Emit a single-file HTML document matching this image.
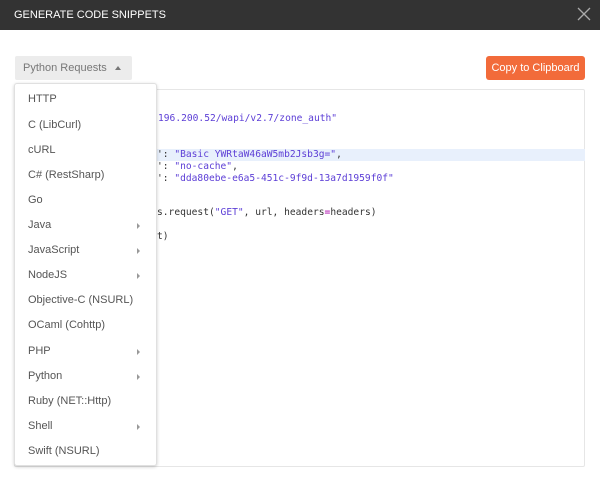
<!DOCTYPE html>
<html><head><style>
*{margin:0;padding:0;box-sizing:border-box}
body{width:600px;height:481px;background:#fff;font-family:"Liberation Sans",sans-serif;position:relative;overflow:hidden}
.hdr{position:absolute;left:0;top:0;width:600px;height:30px;background:#333;color:#fff;font-size:11px;line-height:30px;padding-left:14px}
.x{position:absolute;right:9px;top:7px;width:14px;height:14px}
.dd{position:absolute;left:15px;top:56px;width:117px;height:24px;background:#ececec;border-radius:2px;color:#777;font-size:11px;line-height:24px;padding-left:8px}
.dd:after{content:"";position:absolute;left:100px;top:10px;border-left:3px solid transparent;border-right:3px solid transparent;border-bottom:4px solid #777}
.copy{position:absolute;left:486px;top:56px;width:99px;height:24px;background:#f26b3a;border-radius:3px;color:#fff;font-size:11px;line-height:24px;text-align:center}
.code{position:absolute;left:14px;top:89px;width:571px;height:378px;border:1px solid #e6e6e6;border-radius:2px}
.hl{position:absolute;left:145px;top:149px;width:440px;height:12px;background:#e8f0fc}
.c{position:absolute;font-family:"DejaVu Sans Mono",monospace;font-size:9.6px;color:#333;white-space:pre;line-height:12px}
.s{color:#5c3ed6}
.menu{position:absolute;left:14px;top:83px;width:143px;height:383px;background:#fff;border:1px solid #e0e0e0;border-radius:3px;box-shadow:0 1px 3px rgba(0,0,0,.2)}
.it{position:absolute;left:13px;font-size:11px;color:#555;line-height:14px}
.ar{position:absolute;left:122px;width:0;height:0;border-top:3px solid transparent;border-bottom:3px solid transparent;border-left:3px solid #999}
</style></head><body>
<div class="hdr">GENERATE CODE SNIPPETS</div>
<svg class="x" viewBox="0 0 14 14"><path d="M1 1L13 13M13 1L1 13" stroke="#aaa" stroke-width="1.3"/></svg>
<div class="dd">Python Requests</div>
<div class="copy">Copy to Clipboard</div>
<div class="code"></div>
<div class="hl"></div>
<div class="c s" style="left:158px;top:113px">196.200.52/wapi/v2.7/zone_auth"</div>
<div class="c" style="left:157px;top:149px">': <span class="s">"Basic YWRtaW46aW5mb2Jsb3g="</span>,</div>
<div class="c" style="left:157px;top:161px">': <span class="s">"no-cache"</span>,</div>
<div class="c" style="left:157px;top:173px">': <span class="s">"dda80ebe-e6a5-451c-9f9d-13a7d1959f0f"</span></div>
<div class="c" style="left:157px;top:207px">s.request(<span class="s">"GET"</span>, url, headers<span style="color:#a0a">=</span>headers)</div>
<div class="c" style="left:157px;top:231px">t)</div>
<div class="menu">
<div class="it" style="top:8px">HTTP</div>
<div class="it" style="top:34px">C (LibCurl)</div>
<div class="it" style="top:59px">cURL</div>
<div class="it" style="top:84px">C# (RestSharp)</div>
<div class="it" style="top:109px">Go</div>
<div class="it" style="top:134px">Java</div><div class="ar" style="top:139px"></div>
<div class="it" style="top:159px">JavaScript</div><div class="ar" style="top:164px"></div>
<div class="it" style="top:184px">NodeJS</div><div class="ar" style="top:189px"></div>
<div class="it" style="top:209px">Objective-C (NSURL)</div>
<div class="it" style="top:234px">OCaml (Cohttp)</div>
<div class="it" style="top:260px">PHP</div><div class="ar" style="top:265px"></div>
<div class="it" style="top:285px">Python</div><div class="ar" style="top:290px"></div>
<div class="it" style="top:310px">Ruby (NET::Http)</div>
<div class="it" style="top:335px">Shell</div><div class="ar" style="top:340px"></div>
<div class="it" style="top:360px">Swift (NSURL)</div>
</div>
</body></html>
